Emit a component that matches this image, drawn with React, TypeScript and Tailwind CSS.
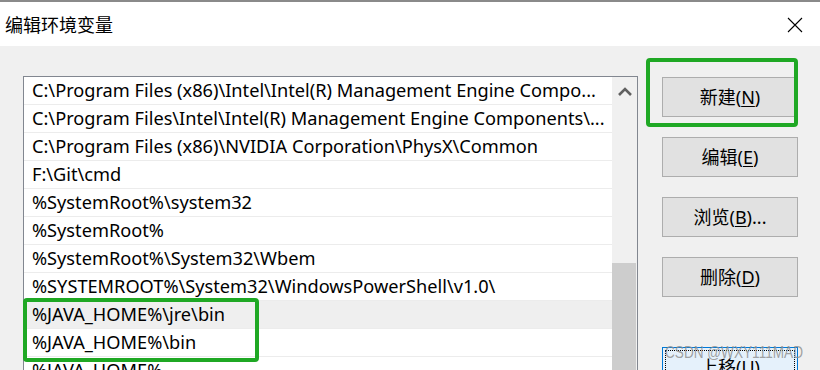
import React from "react";

const rows = [
  "C:\\Program Files (x86)\\Intel\\Intel(R) Management Engine Compo...",
  "C:\\Program Files\\Intel\\Intel(R) Management Engine Components\\...",
  "C:\\Program Files (x86)\\NVIDIA Corporation\\PhysX\\Common",
  "F:\\Git\\cmd",
  "%SystemRoot%\\system32",
  "%SystemRoot%",
  "%SystemRoot%\\System32\\Wbem",
  "%SYSTEMROOT%\\System32\\WindowsPowerShell\\v1.0\\",
  "%JAVA_HOME%\\jre\\bin",
  "%JAVA_HOME%\\bin",
  "%JAVA_HOME%",
];

function Btn({ label, mn, tail, focused }: { label: string; mn: string; tail?: string; focused?: boolean }) {
  return (
    <div
      className={
        "relative flex h-[40px] w-[136px] shrink-0 items-center justify-center border text-[18px] text-black " +
        (focused ? "border-[#0078d7] bg-[#e5f1fb]" : "border-[#adadad] bg-[#e1e1e1]")
      }
    >
      {focused && <div className="pointer-events-none absolute inset-[2px] border border-dotted border-black" />}
      <span>
        {label}(<span className="underline underline-offset-2">{mn}</span>){tail}
      </span>
    </div>
  );
}

export default function App() {
  return (
    <div
      className="relative h-[370px] w-[820px] overflow-hidden bg-[#f0f0f0]"
      style={{ fontFamily: '"Noto Sans", "Noto Sans CJK SC", sans-serif' }}
    >
      <div className="h-[2px] bg-[#8a8a8a]" />
      <div className="flex h-[44px] items-center justify-between bg-white pl-[5px] pr-[17px]">
        <span className="text-[18px] text-black" style={{ fontFamily: '"Noto Sans CJK SC", sans-serif' }}>
          编辑环境变量
        </span>
        <svg width="16" height="16" viewBox="0 0 16 16" className="mt-[1px]">
          <path d="M1 1 L15 15 M15 1 L1 15" stroke="#000" strokeWidth="1.1" />
        </svg>
      </div>
      <div className="flex pl-[23px] pt-[30px]">
        <div className="flex h-[320px] w-[615px] shrink-0 border border-[#828790] bg-white">
          <div className="w-[588px] shrink-0">
            {rows.map((r, i) => (
              <div
                key={i}
                className={
                  "flex h-[28px] items-center overflow-hidden whitespace-nowrap border-b border-[#ececec] pl-[8px] pt-[1px] text-[18.2px] text-black " +
                  (i === 8 ? "bg-[#efefef]" : "")
                }
              >
                {r}
              </div>
            ))}
          </div>
          <div className="flex w-[25px] shrink-0 flex-col bg-[#f0f0f0]">
            <div className="flex h-[30px] shrink-0 items-center justify-center">
              <svg width="14" height="10" viewBox="0 0 14 10">
                <path d="M1 8 L7 2 L13 8" stroke="#606060" strokeWidth="2.6" fill="none" />
              </svg>
            </div>
            <div className="h-[156px] shrink-0" />
            <div className="h-[200px] w-[24px] shrink-0 bg-[#cdcdcd]" />
          </div>
        </div>
        <div className="ml-[24px] mt-[1px] flex flex-col">
          <Btn label="新建" mn="N" />
          <div className="h-[20px] shrink-0" />
          <Btn label="编辑" mn="E" />
          <div className="h-[20px] shrink-0" />
          <Btn label="浏览" mn="B" tail="..." />
          <div className="h-[20px] shrink-0" />
          <Btn label="删除" mn="D" />
          <div className="h-[50px] shrink-0" />
          <Btn label="上移" mn="U" focused />
        </div>
      </div>
      <div className="pointer-events-none absolute left-[646px] top-[58px] h-[69px] w-[152px] rounded-[4px] border-[4px] border-[#1fa824]" />
      <div className="pointer-events-none absolute left-[23px] top-[298px] h-[64px] w-[236px] rounded-[4px] border-[4px] border-[#1fa824]" />
      <div
        className="pointer-events-none absolute left-[665px] top-[344px] origin-left scale-x-[0.85] whitespace-nowrap text-[16px] leading-[18px] text-[#8c8c8c]/80"
        style={{ fontFamily: '"Liberation Sans", sans-serif' }}
      >
        CSDN @WXY111MAD
      </div>
    </div>
  );
}
